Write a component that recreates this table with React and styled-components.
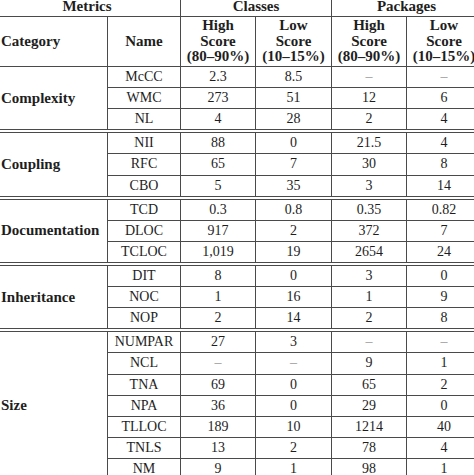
import React from "react";
import styled, { createGlobalStyle } from "styled-components";

const GlobalStyle = createGlobalStyle`
  html, body {
    margin: 0;
    padding: 0;
    background: #ffffff;
    overflow: hidden;
  }
`;

const LINE = "#4a4a4a";

const Frame = styled.div`
  margin: -4px 0 0 -7px;
  width: 500px;
`;

const Table = styled.table`
  border-collapse: collapse;
  table-layout: fixed;
  width: 488px;
  font-family: "Liberation Serif", "Times New Roman", serif;
  color: #1e1e1e;
`;

const Col = styled.col`
  width: ${(p) => p.$w}px;
`;

const HeadCell = styled.th`
  border: 1px solid ${LINE};
  font-weight: 700;
  font-size: 15px;
  line-height: 15.5px;
  height: ${(p) => p.$h || 20}px;
  padding: 0;
  text-align: ${(p) => (p.$left ? "left" : "center")};
  padding-left: ${(p) => (p.$left ? "7px" : "0")};
  vertical-align: middle;
  box-sizing: border-box;
`;

const CategoryCell = styled.td`
  border: 1px solid ${LINE};
  border-top: ${(p) => (p.$double ? `4px double ${LINE}` : `1px solid ${LINE}`)};
  font-weight: 700;
  font-size: 15px;
  text-align: left;
  padding: 0 0 0 7px;
  vertical-align: middle;
`;

const Cell = styled.td`
  border: 1px solid ${LINE};
  border-top: ${(p) => (p.$double ? `4px double ${LINE}` : `1px solid ${LINE}`)};
  font-size: 14px;
  line-height: 16px;
  height: 20.12px;
  padding: 0;
  text-align: center;
  vertical-align: middle;
`;

const Dash = styled.span`
  color: #9a9a9a;
`;

const groups = [
  {
    name: "Complexity",
    rows: [
      ["McCC", "2.3", "8.5", "–", "–"],
      ["WMC", "273", "51", "12", "6"],
      ["NL", "4", "28", "2", "4"],
    ],
  },
  {
    name: "Coupling",
    rows: [
      ["NII", "88", "0", "21.5", "4"],
      ["RFC", "65", "7", "30", "8"],
      ["CBO", "5", "35", "3", "14"],
    ],
  },
  {
    name: "Documentation",
    rows: [
      ["TCD", "0.3", "0.8", "0.35", "0.82"],
      ["DLOC", "917", "2", "372", "7"],
      ["TCLOC", "1,019", "19", "2654", "24"],
    ],
  },
  {
    name: "Inheritance",
    rows: [
      ["DIT", "8", "0", "3", "0"],
      ["NOC", "1", "16", "1", "9"],
      ["NOP", "2", "14", "2", "8"],
    ],
  },
  {
    name: "Size",
    rows: [
      ["NUMPAR", "27", "3", "–", "–"],
      ["NCL", "–", "–", "9", "1"],
      ["TNA", "69", "0", "65", "2"],
      ["NPA", "36", "0", "29", "0"],
      ["TLLOC", "189", "10", "1214", "40"],
      ["TNLS", "13", "2", "78", "4"],
      ["NM", "9", "1", "98", "1"],
    ],
  },
];

const ScoreHead = ({ label, range }) => (
  <HeadCell $h={50}>
    {label}
    <br />
    Score
    <br />
    {range}
  </HeadCell>
);

const Value = ({ v }) => (v === "–" ? <Dash>–</Dash> : v);

export default function App() {
  return (
    <>
      <GlobalStyle />
      <Frame>
        <Table>
          <colgroup>
            <Col $w={114} />
            <Col $w={73} />
            <Col $w={75} />
            <Col $w={76} />
            <Col $w={75} />
            <Col $w={75} />
          </colgroup>
          <thead>
            <tr>
              <HeadCell colSpan={2}>Metrics</HeadCell>
              <HeadCell colSpan={2}>Classes</HeadCell>
              <HeadCell colSpan={2}>Packages</HeadCell>
            </tr>
            <tr>
              <HeadCell $left $h={50}>Category</HeadCell>
              <HeadCell $h={50}>Name</HeadCell>
              <ScoreHead label="High" range="(80–90%)" />
              <ScoreHead label="Low" range="(10–15%)" />
              <ScoreHead label="High" range="(80–90%)" />
              <ScoreHead label="Low" range="(10–15%)" />
            </tr>
          </thead>
          <tbody>
            {groups.map((g, gi) =>
              g.rows.map((r, ri) => {
                const dbl = gi > 0 && ri === 0;
                return (
                  <tr key={g.name + r[0]}>
                    {ri === 0 && (
                      <CategoryCell rowSpan={g.rows.length} $double={dbl}>
                        {g.name}
                      </CategoryCell>
                    )}
                    {r.map((v, ci) => (
                      <Cell key={ci} $double={dbl}>
                        <Value v={v} />
                      </Cell>
                    ))}
                  </tr>
                );
              })
            )}
          </tbody>
        </Table>
      </Frame>
    </>
  );
}
